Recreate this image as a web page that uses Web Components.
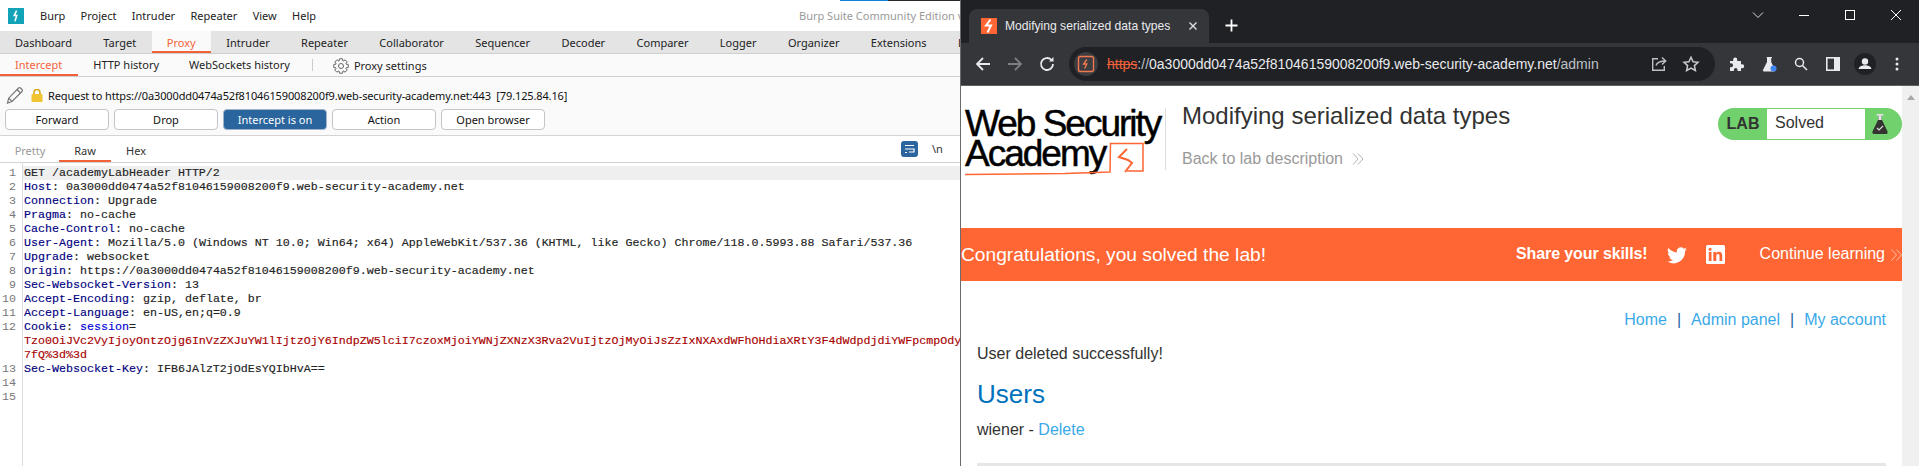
<!DOCTYPE html>
<html lang="en"><head><meta charset="utf-8"><title>Burp and browser</title>
<style>
html,body{margin:0;padding:0;height:466px;overflow:hidden;background:#fff}
body{display:flex;font-family:"Liberation Sans",sans-serif}
</style></head><body>
<burp-window></burp-window>
<browser-window></browser-window>
<script>
function def(name, html, init){
  customElements.define(name, class extends HTMLElement{
    constructor(){super();const r=this.attachShadow({mode:'open'});r.innerHTML=html;}
    connectedCallback(){if(init)init(this.shadowRoot,this);}
  });
}
function gear(){
  let d='';const n=8,c=8;
  for(let i=0;i<n;i++){
    const a=i*2*Math.PI/n;
    const pts=[[5.4,-.36],[7.4,-.2],[7.4,.2],[5.4,.36]];
    pts.forEach(([r,o],j)=>{const x=(c+r*Math.cos(a+o)).toFixed(2),y=(c+r*Math.sin(a+o)).toFixed(2);d+=(i===0&&j===0?'M':'L')+x+' '+y;});
  }
  return d+'z';
}

def('burp-button',`<style>
:host{display:block;width:104px;height:21px;box-sizing:border-box;border:1px solid #c4c4c4;border-radius:4px;background:#fff;
font:11px/19px "Noto Sans",sans-serif;color:#111;text-align:center}
:host([on]){background:#2a659e;border-color:#9fb4c8;color:#fff}
</style><slot></slot>`);

def('burp-tab',`<style>
:host{display:flex;align-items:center;justify-content:center;box-sizing:border-box;height:100%;padding:2px 15.700px 0;font:11px "Noto Sans",sans-serif;color:#222;border-bottom:2px solid transparent;white-space:nowrap;flex:none}
:host([active]){color:#f2623a;border-bottom-color:#f2623a;background:#fafafa}
</style><slot></slot>`);

def('burp-topbar',`<style>
:host{display:grid;grid-template-columns:799px 1fr;align-items:center;height:31px;flex:none;background:#fff;font:11px "Noto Sans",sans-serif;color:#222;position:relative;overflow:hidden}
.l{display:flex;align-items:center}
svg{margin:0 0 0 8px;flex:none}
nav{display:flex;margin-left:16px;gap:15.300px}
.t{color:#9a9a9a;white-space:nowrap}
.edge{position:absolute;left:840px;top:0;width:48px;height:1px;background:#0a84d8}
.edge2{position:absolute;left:888px;top:0;width:72px;height:1px;background:#2a2a2a}
</style>
<div class="l"><svg width="16" height="16" viewBox="0 0 16 16"><rect width="16" height="16" fill="#12a3b8"/><path d="M8.600 2.600 6.200 7.600h2.600L6.900 13.200" fill="none" stroke="#fff" stroke-width="1.500"/></svg>
<nav><span>Burp</span><span>Project</span><span>Intruder</span><span>Repeater</span><span>View</span><span>Help</span></nav></div>
<span class="t">Burp Suite Community Edition v</span><i class="edge"></i><i class="edge2"></i>`);

def('burp-maintabs',`<style>
:host{display:flex;height:23px;box-sizing:border-box;flex:none;background:#e4e4e4;border-bottom:1px solid #cfcfcf;overflow:hidden}
</style>
<burp-tab style="padding-left:15px">Dashboard</burp-tab>
<burp-tab>Target</burp-tab>
<burp-tab active style="padding-left:15px;padding-right:15px">Proxy</burp-tab>
<burp-tab>Intruder</burp-tab>
<burp-tab>Repeater</burp-tab>
<burp-tab>Collaborator</burp-tab>
<burp-tab>Sequencer</burp-tab>
<burp-tab>Decoder</burp-tab>
<burp-tab>Comparer</burp-tab>
<burp-tab>Logger</burp-tab>
<burp-tab>Organizer</burp-tab>
<burp-tab>Extensions</burp-tab>
<burp-tab>Learn</burp-tab>`);

def('burp-subtabs',`<style>
:host{display:flex;height:23px;box-sizing:border-box;flex:none;background:#fafafa;border-bottom:1px solid #cfcfcf;font:11px "Noto Sans",sans-serif;color:#222;align-items:stretch}
.s{width:1px;height:12px;background:#ccc;margin:5px 20px 0 6px}
.p{display:flex;align-items:center;gap:5px;padding-top:1px}
</style>
<burp-tab active style="padding:0 16px 0 15px">Intercept</burp-tab>
<burp-tab style="padding:0 15px 0 15px">HTTP history</burp-tab>
<burp-tab style="padding:0 16px 0 15px">WebSockets history</burp-tab>
<div class="s"></div>
<div class="p"><svg id="g" width="16" height="16" viewBox="0 0 16 16" fill="none" stroke="#666" stroke-width="1"><path id="gp"/><circle cx="8" cy="8" r="2.500"/></svg><span>Proxy settings</span></div>`,r=>{r.getElementById('gp').setAttribute('d',gear());});

def('burp-request',`<style>
:host{display:block;flex:none;height:59px;background:#fafafa;border-bottom:1px solid #d4d4d4;box-sizing:border-box;font:11px "Noto Sans",sans-serif;color:#111}
.a{display:flex;align-items:center;height:32px;padding-left:6px;gap:7px;white-space:nowrap;padding-top:4px;box-sizing:border-box}
.b{display:flex;gap:5px;padding-left:5px}
.w{display:flex;align-items:center;gap:5px;letter-spacing:-.13px}
</style>
<div class="a"><svg width="18" height="18" viewBox="0 0 18 18" fill="none" stroke="#777" stroke-width="1.200"><path d="M1.500 17l1.200-4.800L12.500 2a1.500 1.500 0 0 1 2 0l1.500 1.500a1.500 1.500 0 0 1 0 2L6 15.500z"/><path d="M2.700 12.200l3.300 3.300M11 3.500l3.500 3.500"/></svg>
<span class="w"><svg width="12" height="13" viewBox="0 0 12 13"><path d="M3 6V3.500a3 3 0 0 1 6 0V6" fill="none" stroke="#d8a916" stroke-width="1.600"/><rect x="0.500" y="5" width="11" height="8" rx="1" fill="#f0c330"/></svg><span>Request to https://0a3000dd0474a52f81046159008200f9.web-security-academy.net:443&nbsp;&nbsp;[79.125.84.16]</span></span></div>
<div class="b"><burp-button>Forward</burp-button><burp-button>Drop</burp-button><burp-button on>Intercept is on</burp-button><burp-button>Action</burp-button><burp-button>Open browser</burp-button></div>`);

def('burp-edtabs',`<style>
:host{display:flex;flex:none;height:27px;box-sizing:border-box;background:#fff;border-bottom:1px solid #d4d4d4;font:11px "Noto Sans",sans-serif;color:#333;align-items:stretch}
span{display:flex;align-items:center;justify-content:center;padding-top:4px;box-sizing:border-box;border-bottom:2px solid transparent;flex:none}
.g{color:#999;width:59px;padding-left:1px}
.on{border-bottom-color:#f2623a;width:52px}
.h{width:50px}
.r{margin-left:740px;display:flex;align-items:center;gap:14px;padding-bottom:1px}
.r i{font-style:normal;font-size:11px;color:#333}
</style>
<span class="g">Pretty</span><span class="on">Raw</span><span class="h">Hex</span>
<div class="r"><svg width="17" height="16" viewBox="0 0 17 16"><rect width="17" height="16" rx="3" fill="#2a659e"/><path d="M4 4.500h9M4 8h9v3h-5M4 11.500h2" fill="none" stroke="#fff" stroke-width="1.200"/></svg><i>\\n</i></div>`);

const K=(k,v)=>`<b>${k}</b>: ${v}`;
const LINES=[
 ['1','GET /academyLabHeader HTTP/2','h'],
 ['2',K('Host','0a3000dd0474a52f81046159008200f9.web-security-academy.net')],
 ['3',K('Connection','Upgrade')],
 ['4',K('Pragma','no-cache')],
 ['5',K('Cache-Control','no-cache')],
 ['6',K('User-Agent','Mozilla/5.0 (Windows NT 10.0; Win64; x64) AppleWebKit/537.36 (KHTML, like Gecko) Chrome/118.0.5993.88 Safari/537.36')],
 ['7',K('Upgrade','websocket')],
 ['8',K('Origin','https://0a3000dd0474a52f81046159008200f9.web-security-academy.net')],
 ['9',K('Sec-Websocket-Version','13')],
 ['10',K('Accept-Encoding','gzip, deflate, br')],
 ['11',K('Accept-Language','en-US,en;q=0.9')],
 ['12','<b>Cookie</b>: <u>session</u>='],
 ['','<s>Tzo0OiJVc2VyIjoyOntzOjg6InVzZXJuYW1lIjtzOjY6IndpZW5lciI7czoxMjoiYWNjZXNzX3Rva2VuIjtzOjMyOiJsZzIxNXAxdWFhOHdiaXRtY3F4dWdpdjdiYWFpcmpOdy</s>'],
 ['','<s>7fQ%3d%3d</s>'],
 ['13',K('Sec-Websocket-Key','IFB6JAlzT2jOdEsYQIbHvA==')],
 ['14',''],['15',''],
];
def('burp-editor',`<style>
:host{display:block;flex:1;min-height:0;background:#fff;overflow:hidden;font:11.67px/14px "Liberation Mono",monospace;color:#222;-webkit-text-stroke:.15px currentColor}
.l{display:flex;height:14px;white-space:nowrap}
.n{width:16px;flex:none;text-align:right;color:#777;padding-right:6px;border-right:1px solid #ddd;-webkit-text-stroke:0}
.c{padding-left:1px;flex:1}
.h .c{background:#efefef}
b{font-weight:normal;color:#00007f}
u{text-decoration:none;color:#0000d8}
s{text-decoration:none;color:#a80000}
.gap{height:3px;margin-left:22px;border-left:1px solid #ddd}
.fill{height:100px;margin-left:22px;border-left:1px solid #ddd}
</style><div class="gap"></div><div id="b"></div><div class="fill"></div>`,r=>{
  r.getElementById('b').innerHTML=LINES.map(([n,h,c])=>`<div class="l ${c||''}"><span class="n">${n}</span><span class="c">${h}</span></div>`).join('');
});

def('burp-window',`<style>
:host{display:flex;flex-direction:column;width:960px;height:466px;flex:none;overflow:hidden;background:#fff}
</style><burp-topbar></burp-topbar><burp-maintabs></burp-maintabs><burp-subtabs></burp-subtabs><burp-request></burp-request><burp-edtabs></burp-edtabs><burp-editor></burp-editor>`);

def('chrome-frame',`<style>
:host{display:block;flex:none;background:#202124;color:#e8eaed}
.strip{display:flex;height:43px;align-items:flex-end;padding-left:8px;position:relative}
.tab{display:flex;align-items:center;width:240px;height:34px;box-sizing:border-box;background:#35363a;border-radius:8px 8px 0 0;padding:0 11px 0 12px;font:12.100px "Liberation Sans",sans-serif;color:#e8eaed;gap:8px;white-space:nowrap}
.tab span{flex:1}
.plus{margin:0 0 11px 16px}
.win{margin-left:auto;align-self:flex-start;height:30px;display:flex;align-items:center}
.win svg{display:block}
.bar{display:flex;align-items:center;height:42px;background:#35363a;border-bottom:1px solid #5f6063}
.omni{display:flex;align-items:center;margin-left:13px;width:646px;height:34px;background:#202124;border-radius:17px;box-sizing:border-box;padding:0 15px 0 5px;font:14px "Liberation Sans",sans-serif;white-space:nowrap;color:#e8eaed;flex:none}
.omni .sec{color:#f2623a;text-decoration:line-through;margin-left:9px}
.omni .dim{color:#bdc1c6}
.share{margin-left:auto}
</style>
<div class="strip">
 <div class="tab"><svg width="16" height="16" viewBox="0 0 16 16"><rect width="16" height="16" fill="#ff6633"/><path d="M9.500 1.500 5 7.500h5L6.500 14.500" fill="none" stroke="#fff" stroke-width="2"/></svg><span>Modifying serialized data types</span>
 <svg width="10" height="10" viewBox="0 0 10 10"><path d="M1.500 1.500l7 7M8.500 1.500l-7 7" stroke="#dfe1e5" stroke-width="1.400"/></svg></div>
 <svg class="plus" width="13" height="13" viewBox="0 0 13 13"><path d="M6.500 .5v12M.5 6.500h12" stroke="#fff" stroke-width="1.800"/></svg>
 <div class="win">
  <svg width="46" height="30" viewBox="0 0 46 30"><path d="M18 12.500l5 5 5-5" fill="none" stroke="#ddd"/></svg>
  <svg width="46" height="30" viewBox="0 0 46 30"><path d="M18 15.500h10" stroke="#fff"/></svg>
  <svg width="46" height="30" viewBox="0 0 46 30"><rect x="18.500" y="10.500" width="9" height="9" fill="none" stroke="#fff"/></svg>
  <svg width="46" height="30" viewBox="0 0 46 30"><path d="M18 10l10 10M28 10l-10 10" stroke="#fff"/></svg>
 </div>
</div>
<div class="bar">
 <svg style="margin-left:13px;flex:none" width="18" height="18" viewBox="0 0 18 18" fill="none" stroke="#e8eaed" stroke-width="1.800"><path d="M16 9H3M9 3 3 9l6 6"/></svg>
 <svg style="margin-left:14px;flex:none" width="18" height="18" viewBox="0 0 18 18" fill="none" stroke="#7d7f82" stroke-width="1.800"><path d="M2 9h13M9 3l6 6-6 6"/></svg>
 <svg style="margin-left:14px;flex:none" width="18" height="18" viewBox="0 0 18 18" fill="none" stroke="#e8eaed" stroke-width="1.800"><path d="M15 9a6 6 0 1 1-1.800-4.300"/><path d="M15.500 2v4.500H11" fill="#e8eaed" stroke="none"/></svg>
 <div class="omni"><svg width="24" height="24" viewBox="0 0 24 24" style="flex:none"><circle cx="12" cy="12" r="12" fill="#3c3d40"/><rect x="4.500" y="4.500" width="15" height="15" rx="2" fill="none" stroke="#f2794f" stroke-width="1.400"/><path d="M12.800 7.500 9.600 12h3.200l-2.200 4.500" fill="none" stroke="#f2794f" stroke-width="1.400"/></svg><span class="sec">https</span><span class="dim">://</span><span>0a3000dd0474a52f81046159008200f9.web-security-academy.net</span><span class="dim">/admin</span>
  <svg class="share" width="16" height="16" viewBox="0 0 16 16" fill="none" stroke="#bdc1c6" stroke-width="1.400"><path d="M7 2.700H1.700v11.500h11.600V10M5 9.500C6 6.500 8.500 5 14.500 5M11 1.500 14.700 5 11 8.500"/></svg>
  <svg style="margin-left:15px;flex:none" width="18" height="18" viewBox="0 0 18 18" fill="none" stroke="#c8cbd0" stroke-width="1.500"><path d="M9 2.200l2.100 4.500 4.900.6-3.600 3.300 1 4.900L9 13.100l-4.400 2.400 1-4.900L2 7.300l4.900-.6z"/></svg>
 </div>
 <svg style="margin-left:14px;flex:none" width="16" height="16" viewBox="0 0 16 16" fill="#e8eaed"><path d="M1 5h3.200V3.600a2 2 0 0 1 4 0V5H12v3.200h1.200a2 2 0 0 1 0 4H12V15H8.500v-1.300a1.800 1.800 0 0 0-3.600 0V15H1v-3.700h1.100a2 2 0 0 0 0-4H1z"/></svg>
 <svg style="margin-left:16px;flex:none" width="16" height="15" viewBox="0 0 16 15"><path d="M6 0h5v1h-.8v4L14 13a1 1 0 0 1-1 1.500H3A1 1 0 0 1 2 13l4-8V1H5.500z" fill="#e8eaed"/><circle cx="12.500" cy="11.500" r="3" fill="#4285f4"/></svg>
 <svg style="margin-left:17px;flex:none" width="14" height="14" viewBox="0 0 14 14" fill="none" stroke="#e8eaed" stroke-width="1.500"><circle cx="5.500" cy="5.500" r="4"/><path d="M8.500 8.500 13 13"/></svg>
 <svg style="margin-left:18px;flex:none" width="14" height="14" viewBox="0 0 14 14"><rect x="0.800" y="0.800" width="12.400" height="12.400" fill="none" stroke="#e8eaed" stroke-width="1.600"/><rect x="8" y="1" width="5" height="12" fill="#e8eaed"/></svg>
 <svg style="margin-left:14px;flex:none" width="22" height="22" viewBox="0 0 22 22"><circle cx="11" cy="11" r="11" fill="#202124"/><circle cx="11" cy="8.500" r="3.200" fill="#e8eaed"/><path d="M4.500 16c1-3 3.500-3.700 6.500-3.700s5.500.7 6.500 3.700z" fill="#e8eaed"/></svg>
 <svg style="margin-left:19px;flex:none" width="4" height="16" viewBox="0 0 4 16" fill="#e8eaed"><circle cx="2" cy="3" r="1.500"/><circle cx="2" cy="8" r="1.500"/><circle cx="2" cy="13" r="1.500"/></svg>
</div>`);

def('lab-badge',`<style>
:host{display:flex;width:184px;height:32px;box-sizing:border-box;border-radius:16px;background:#70d16d;align-items:center;font:16px "Liberation Sans",sans-serif;color:#333332;overflow:hidden;flex:none}
b{width:49px;text-align:center;padding-left:1px;box-sizing:border-box}
.s{width:98px;height:30px;line-height:28px;background:#fff;padding-left:8px;box-sizing:border-box}
svg{margin-left:7px}
</style><b>LAB</b><div class="s">Solved</div>
<svg width="16" height="20" viewBox="0 0 16 20"><path d="M6 6 .5 17.500Q0 20 2 20H14Q16 20 15.500 17.500L10 6z" fill="#333332"/><path d="M6 1.500h4V6H6z" fill="#9a9a9a"/><path d="M6.800 1.500h2.400V6H6.800z" fill="#e6e6e6"/><path d="M4.500 0h7v1.500h-7z" fill="#e4e4e4"/><path d="M5 14l2 2 4-4" stroke="#dcdcdc" stroke-width="1.100" fill="none"/></svg>`);

def('lab-header',`<style>
:host{display:flex;flex:none;height:142px;box-sizing:border-box;padding:22px 0 0 4px;align-items:flex-start;font-family:"Liberation Sans",sans-serif;color:#333332}
.logo{width:196px;height:68px;position:relative;flex:none;color:#000;font-size:37px;line-height:30px;letter-spacing:-2px;white-space:nowrap;-webkit-text-stroke:.5px #000;padding-top:1px;box-sizing:border-box}
.logo div{height:30px}
.logo svg{position:absolute;left:0;top:0;overflow:visible}
.sep{width:1px;height:62px;background:#dcdcdc;margin-left:4px;flex:none}
.t{margin-left:16px;flex:1;min-width:0}
h1{font-size:24px;font-weight:normal;margin:0;line-height:28px;margin-top:-6px;color:#333332}
.b{display:flex;align-items:center;gap:9px;margin-top:19px;color:#999;font-size:16px;line-height:20px}
</style>
<div class="logo"><div>Web Security</div><div>Academy</div>
<svg width="196" height="68" viewBox="0 0 196 68" fill="none" stroke="#ff6633" stroke-width="1.500"><path d="M0 66.500 100 65.500 145 64 145.500 35.500H178V63H162"/><path d="M162 41 154 49 163 52 167 55 160 64" stroke-width="2"/></svg></div>
<div class="sep"></div>
<div class="t"><h1>Modifying serialized data types</h1><div class="b">Back to lab description<svg width="12" height="12" viewBox="0 0 12 12" fill="none" stroke="#b5b5b5"><path d="M1 .5l5 5.500-5 5.500M6 .5l5 5.500-5 5.500"/></svg></div></div>
<lab-badge></lab-badge>`);

def('lab-banner',`<style>
:host{display:flex;align-items:center;flex:none;height:53px;background:#ff6633;color:#fff;font:16px "Liberation Sans",sans-serif;white-space:nowrap}
h4{font-size:19.200px;font-weight:normal;margin:0 auto 0 0}
b{margin-right:19px;position:relative;top:-1px;letter-spacing:-.1px}
svg{flex:none}
.c{margin-left:35px;position:relative;top:-1px}
.ch{margin-left:6px}
</style><h4>Congratulations, you solved the lab!</h4><b>Share your skills!</b>
<svg width="20" height="18" viewBox="0 0 20 18" fill="#fff"><path d="M20 3.200c-.7.3-1.500.6-2.400.7.900-.5 1.500-1.300 1.800-2.200-.8.5-1.700.8-2.600 1A4.100 4.100 0 0 0 9.800 6.400 11.600 11.600 0 0 1 1.400 2.100a4.100 4.100 0 0 0 1.300 5.500c-.7 0-1.300-.2-1.900-.5 0 2 1.400 3.700 3.300 4.100-.6.200-1.200.2-1.800.1.500 1.600 2 2.800 3.800 2.800A8.200 8.200 0 0 1 0 15.300 11.600 11.600 0 0 0 18 5c.8-.5 1.500-1.100 2-1.800z"/></svg>
<svg style="margin-left:19px" width="19" height="19" viewBox="0 0 19 19"><rect width="19" height="19" rx="1.500" fill="#fff"/><path d="M2.800 7h2.700v9H2.800zM4.100 2.700a1.600 1.600 0 1 1 0 3.200 1.600 1.600 0 0 1 0-3.200zM7.300 7H10v1.300c.5-.9 1.500-1.500 2.800-1.500 2.700 0 3.400 1.700 3.400 4.200v5h-2.700v-4.500c0-1.100 0-2.400-1.500-2.400s-1.700 1.100-1.700 2.300V16H7.300z" fill="#ff6633"/></svg>
<span class="c">Continue learning</span><svg class="ch" width="11" height="12" viewBox="0 0 11 12" fill="none" stroke="#ffc0a8"><path d="M.5.500l5 5.500-5 5.500M5.500.5l5 5.500-5 5.500"/></svg>`);

def('lab-body',`<style>
:host{display:block;flex:1;min-height:0;padding:0 16px;font:16px/20px "Liberation Sans",sans-serif;color:#333332;overflow:hidden}
a{color:#3ba9e8;text-decoration:none}
nav{display:flex;justify-content:flex-end;margin-top:29px;gap:10px;white-space:nowrap}
nav i{font-style:normal;color:#29689e}
p{margin:0}
.m{margin-top:14px}
h2{font-size:26px;font-weight:normal;line-height:30px;margin:15px 0 0;color:#0071bc}
.u{margin-top:11px}
hr{border:0;height:3px;background:#e6e6e6;margin:23px 0 0}
</style>
<nav><a>Home</a><i>|</i><a>Admin panel</a><i>|</i><a>My account</a></nav>
<p class="m">User deleted successfully!</p>
<h2>Users</h2>
<p class="u">wiener - <a>Delete</a></p>
<hr>`);

def('browser-window',`<style>
:host{display:flex;flex-direction:column;flex:1;min-width:0;height:466px;border-left:1px solid #6a6a6a;background:#fff;overflow:hidden;box-sizing:border-box}
.page{flex:1;min-height:0;display:flex}
.main{flex:1;min-width:0;display:flex;flex-direction:column;background:#fff}
.sb{width:17px;flex:none;background:#f0f0f0;display:flex;justify-content:center;padding-top:9px;box-sizing:border-box}
</style>
<chrome-frame></chrome-frame>
<div class="page"><div class="main"><lab-header></lab-header><lab-banner></lab-banner><lab-body></lab-body></div>
<div class="sb"><svg width="8" height="5" viewBox="0 0 8 5"><path d="M4 0l4 5H0z" fill="#a8a8a8"/></svg></div></div>`);
</script>
</body></html>
